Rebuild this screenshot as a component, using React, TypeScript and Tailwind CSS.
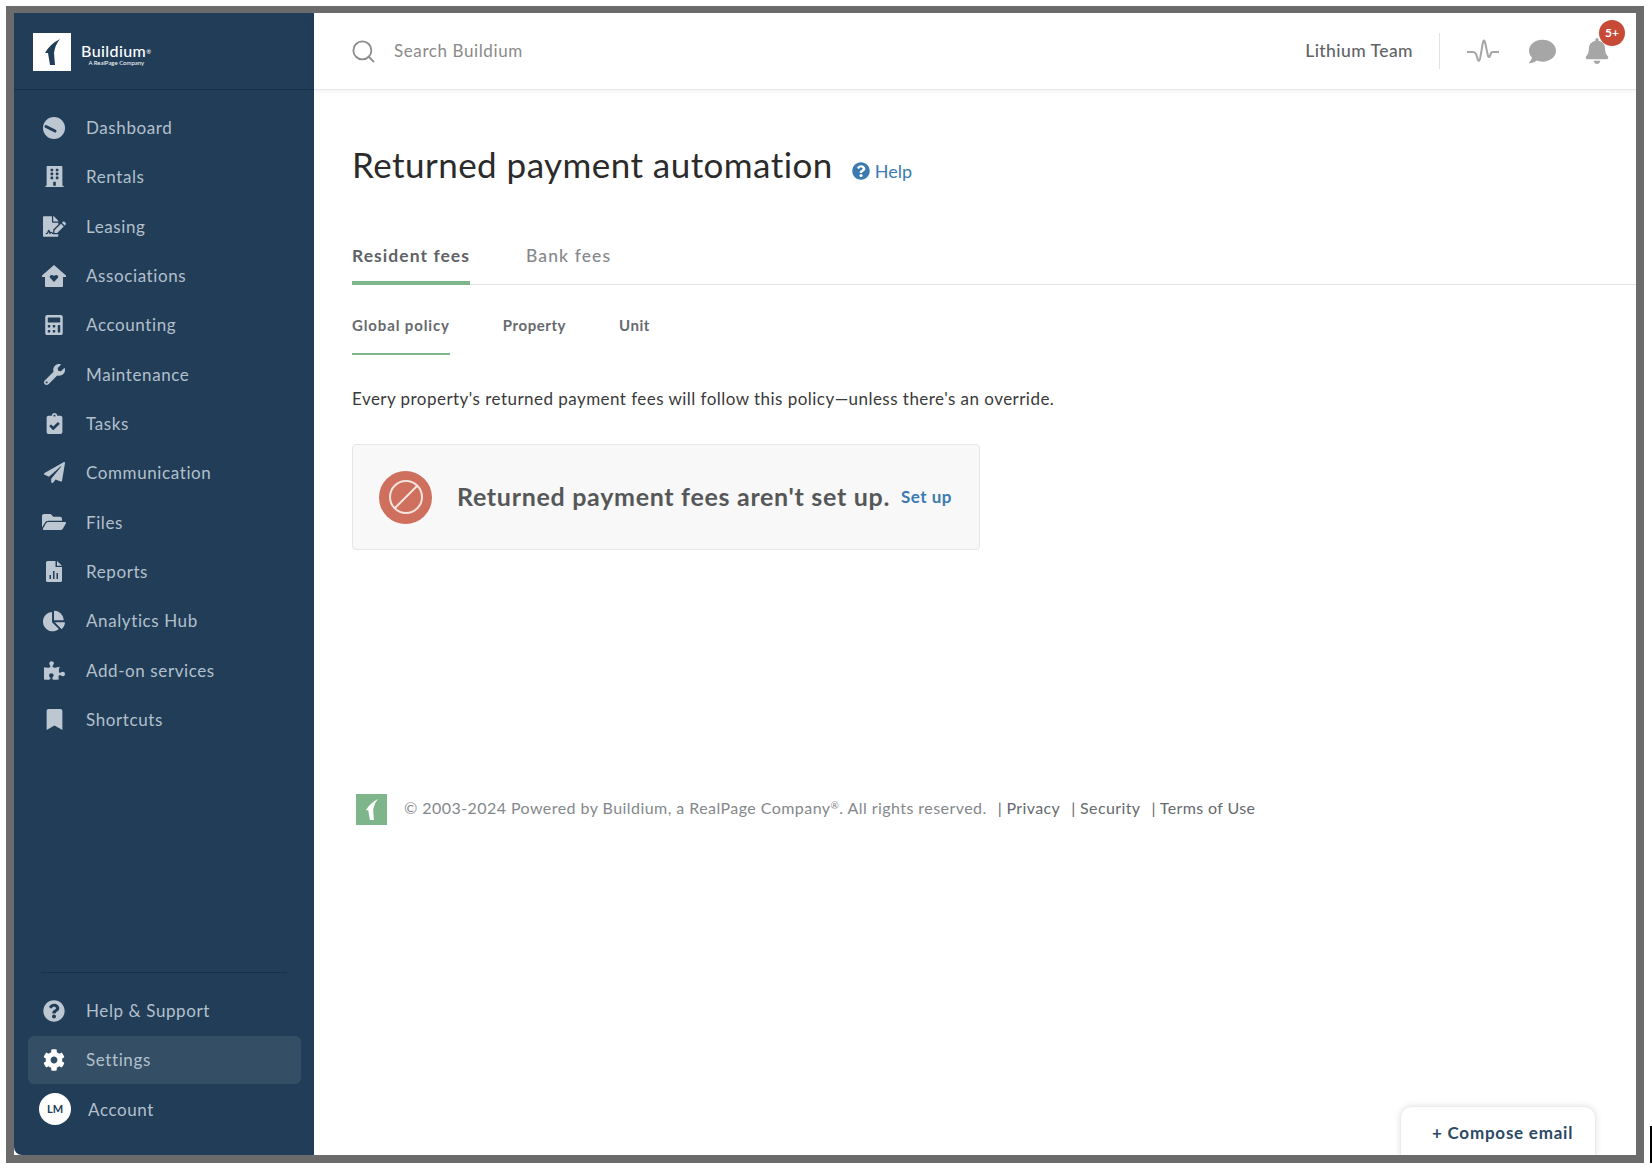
import {
  FaBell,
  FaBookmark,
  FaBuilding,
  FaCalculator,
  FaChartPie,
  FaClipboardCheck,
  FaCog,
  FaComment,
  FaFileSignature,
  FaFolderOpen,
  FaPaperPlane,
  FaPuzzlePiece,
  FaQuestionCircle,
  FaWrench
} from 'react-icons/fa';
import { Search } from 'lucide-react';

function DashboardIcon() {
  return (
    <svg viewBox="0 0 22 22" className="w-[22px] h-[22px]">
      <circle cx="11" cy="11" r="11" fill="currentColor" />
      <path d="M3 9.5 L12 14" stroke="#223d58" strokeWidth="3" strokeLinecap="round" />
    </svg>
  );
}

function HouseHeartIcon() {
  return (
    <svg viewBox="0 0 24 22" className="w-[24px] h-[22px]">
      <path
        fill="currentColor"
        fillRule="evenodd"
        d="M12 0 L24 10.5 V12 H21 V21 Q21 22 20 22 H4 Q3 22 3 21 V12 H0 V10.5 Z M12 17 L16 12.8 C17.4 10.6 14 8.6 12 11 C10 8.6 6.6 10.6 8 12.8 Z"
      />
    </svg>
  );
}

function ReportIcon() {
  return (
    <svg viewBox="0 0 16 21" className="w-[16px] h-[21px]">
      <path
        fill="currentColor"
        fillRule="evenodd"
        d="M1.5 0 H9.5 V6 H16 V19.5 Q16 21 14.5 21 H1.5 Q0 21 0 19.5 V1.5 Q0 0 1.5 0 Z M3.5 14 V18 H5 V14 Z M7 10 V18 H8.5 V10 Z M10.5 12 V18 H12 V12 Z"
      />
      <path fill="currentColor" d="M11 0 L16 4.8 H11 Z" />
    </svg>
  );
}

function PulseIcon() {
  return (
    <svg viewBox="0 0 34 24" className="w-[34px] h-[24px]" fill="none" stroke="#a6a6a6" strokeWidth="2">
      <path d="M1 13 H7 Q9 13 10 15 L12 21 Q13 23 14 20 L17 3 Q18 0 19 3 L22 17 Q23 19 24 17 L25 14 Q26 13 27 13 H33" />
    </svg>
  );
}

function NavItem({
  icon,
  label,
  active
}: {
  icon: React.ReactNode;
  label: string;
  active?: boolean;
}) {
  return (
    <div className={`h-[49.33px] flex items-center ${active ? 'relative' : ''}`}>
      {active && <div className="absolute left-[14px] right-[13px] top-[1px] bottom-[1px] rounded-md bg-[#344f65]" />}
      <div
        className={`relative w-[72px] flex justify-center pl-[8px] shrink-0 text-[21px] ${
          active ? 'text-white' : 'text-[#bcc7d2]'
        }`}
      >
        {icon}
      </div>
      <span className="relative text-[17px] tracking-[0.6px] text-[#b3c0cc]">{label}</span>
    </div>
  );
}

const topItems = [
  { icon: <DashboardIcon />, label: 'Dashboard' },
  { icon: <FaBuilding />, label: 'Rentals' },
  { icon: <FaFileSignature className="text-[23px]" />, label: 'Leasing' },
  { icon: <HouseHeartIcon />, label: 'Associations' },
  { icon: <FaCalculator className="text-[20px]" />, label: 'Accounting' },
  { icon: <FaWrench />, label: 'Maintenance' },
  { icon: <FaClipboardCheck />, label: 'Tasks' },
  { icon: <FaPaperPlane />, label: 'Communication' },
  { icon: <FaFolderOpen className="text-[24px]" />, label: 'Files' },
  { icon: <ReportIcon />, label: 'Reports' },
  { icon: <FaChartPie className="text-[22px]" />, label: 'Analytics Hub' },
  { icon: <FaPuzzlePiece />, label: 'Add-on services' },
  { icon: <FaBookmark />, label: 'Shortcuts' }
];

function BuildiumMark({ color }: { color: string }) {
  return (
    <svg viewBox="0 0 38 38" className="w-full h-full">
      <path fill={color} d="M27 6 Q17 11 12 20 L15 20 L17 32 L22 32 L21 20 Q22 12 27 6 Z" />
    </svg>
  );
}

function Sidebar() {
  return (
    <aside className="w-[300px] shrink-0 bg-[#223d58] rounded-bl-lg flex flex-col">
      <div className="h-[77px] shrink-0 border-b border-[#1a3046] flex items-center pl-[19px] pt-[2px]">
        <div className="w-[38px] h-[38px] bg-white shrink-0">
          <BuildiumMark color="#223d58" />
        </div>
        <div className="ml-[10px] pt-[4px] flex flex-col items-center text-white">
          <span className="text-[16px] leading-[17px] tracking-[0.4px] font-medium">
            Buildium<sup className="text-[6px]">®</sup>
          </span>
          <span className="text-[6px] leading-[8px]">A RealPage Company</span>
        </div>
      </div>
      <nav className="pt-[13px] flex-1">
        {topItems.map(item => (
          <NavItem key={item.label} icon={item.icon} label={item.label} />
        ))}
      </nav>
      <div className="mx-[27px] border-t border-[#1a3046] mb-[13px]" />
      <div className="pb-[21px]">
        <NavItem icon={<FaQuestionCircle className="text-[22px]" />} label="Help & Support" />
        <NavItem icon={<FaCog className="text-[22px]" />} label="Settings" active />
        <div className="h-[49.33px] flex items-center">
          <div className="ml-[25px] w-[32px] h-[32px] rounded-full bg-white flex items-center justify-center text-[11px] font-bold text-[#223d58]">
            LM
          </div>
          <span className="ml-[17px] text-[17px] tracking-[0.6px] text-[#b3c0cc]">Account</span>
        </div>
      </div>
    </aside>
  );
}

function Header() {
  return (
    <header className="h-[77px] shrink-0 border-b border-[#e6e6e6] shadow-[0_2px_5px_rgba(0,0,0,0.05)] flex items-center pl-[36px] pr-[26px]">
      <Search className="w-[27px] h-[27px] text-[#8c8c8c]" strokeWidth={1.6} />
      <span className="ml-[17px] text-[17px] tracking-[0.6px] text-[#8a8a8a]">Search Buildium</span>
      <span className="ml-auto text-[17.5px] tracking-[0.44px] font-medium text-[#5f6367]">Lithium Team</span>
      <div className="ml-[26px] h-[36px] w-px bg-[#e2e2e2]" />
      <div className="ml-[26px]">
        <PulseIcon />
      </div>
      <FaComment className="ml-[29px] text-[27px] text-[#a6a6a6]" />
      <div className="relative ml-[28px]">
        <FaBell className="text-[26px] text-[#a6a6a6]" />
        <span className="absolute -top-[18px] left-[15px] w-[26px] h-[26px] rounded-full bg-[#c64a35] flex items-center justify-center text-[12px] font-bold text-white">
          5+
        </span>
      </div>
    </header>
  );
}

function Footer() {
  return (
    <footer className="mt-[244px] ml-[4px] flex items-center text-[16px] tracking-[0.38px] text-[#666a6e]">
      <div className="w-[31px] h-[31px] bg-[#7fb58a] shrink-0">
        <BuildiumMark color="#ffffff" />
      </div>
      <div className="flex items-center pb-[4px]">
        <span className="ml-[17px] text-[#85888b] tracking-[0.44px]">
          © 2003-2024 Powered by Buildium, a RealPage Company<sup className="text-[10px]">®</sup>. All rights reserved.
        </span>
        <span className="ml-[11px]">| Privacy</span>
        <span className="ml-[11px]">| Security</span>
        <span className="ml-[11px]">| Terms of Use</span>
      </div>
    </footer>
  );
}

export default function App() {
  return (
    <div className="relative w-[1652px] h-[1170px] bg-white pl-[6px] pt-[6px] font-['Lato',sans-serif]">
      <div className="relative w-[1638px] h-[1157px] border-x-[8px] border-t-[7px] border-b-[8px] border-[#6b6b6b] flex overflow-hidden bg-white">
        <Sidebar />
        <main className="flex-1 min-w-0 flex flex-col">
          <Header />
          <div className="pl-[38px] flex-1">
            <div className="pt-[50px] flex items-center h-[98px]">
              <h1 className="text-[35px] leading-[48px] tracking-[0.45px] text-[#2b2b2b]">Returned payment automation</h1>
              <FaQuestionCircle className="ml-[19px] mt-[14px] text-[18px] text-[#3a7ab0]" />
              <span className="ml-[5px] mt-[14px] text-[18px] text-[#3a7ab0]">Help</span>
            </div>
            <div className="mt-[35px] h-[62px] border-b border-[#e2e2e2] flex items-start gap-[57px]">
              <div className="h-[62px] border-b-[4px] border-[#7fb58a] pt-[20px]">
                <span className="text-[17.5px] font-bold tracking-[1.05px] text-[#5f6367]">Resident fees</span>
              </div>
              <div className="pt-[20px] -ml-[1px]">
                <span className="text-[17.5px] tracking-[1.1px] font-medium text-[#85888b]">Bank fees</span>
              </div>
            </div>
            <div className="flex items-start gap-[53px] h-[70px]">
              <div className="h-[70px] border-b-[2px] border-[#7fb58a] pt-[28px]">
                <span className="text-[15px] font-bold tracking-[0.87px] text-[#666a6e]">Global policy</span>
              </div>
              <div className="pt-[28px]">
                <span className="text-[15px] font-bold tracking-[0.55px] text-[#666a6e]">Property</span>
              </div>
              <div className="pt-[28px]">
                <span className="text-[15px] font-bold tracking-[0.55px] text-[#666a6e]">Unit</span>
              </div>
            </div>
            <p className="mt-[33px] text-[17px] leading-[22px] tracking-[0.46px] text-[#3a3a3a]">
              Every property's returned payment fees will follow this policy—unless there's an override.
            </p>
            <div className="mt-[34px] w-[628px] h-[106px] rounded bg-[#f8f8f8] border border-[#e6e6e6] flex items-center pl-[26px]">
              <div className="w-[53px] h-[53px] rounded-full bg-[#cf6f5d] flex items-center justify-center shrink-0">
                <svg viewBox="0 0 36 36" className="w-[36px] h-[36px]" fill="none" stroke="#f7e3df" strokeWidth="2">
                  <circle cx="18" cy="18" r="16" />
                  <path d="M7 29 L29 7" />
                </svg>
              </div>
              <span className="ml-[25px] text-[25px] font-bold tracking-[0.7px] text-[#555759]">
                Returned payment fees aren't set up.
              </span>
              <span className="ml-[11px] text-[17px] tracking-[0.5px] font-bold text-[#3a7ab0]">Set up</span>
            </div>
            <Footer />
          </div>
        </main>
        <div className="absolute right-[40px] -bottom-[2px] w-[196px] h-[51px] bg-white rounded-t-xl border border-[#ececec] shadow-[0_0_6px_rgba(0,0,0,0.12)] pl-[31px] pt-[13px]">
          <span className="text-[17px] tracking-[0.77px] font-bold text-[#2b4a63]">+ Compose email</span>
        </div>
      </div>
      <div className="absolute right-0 top-[1126px] h-[37px] w-[2px] bg-black" />
    </div>
  );
}
